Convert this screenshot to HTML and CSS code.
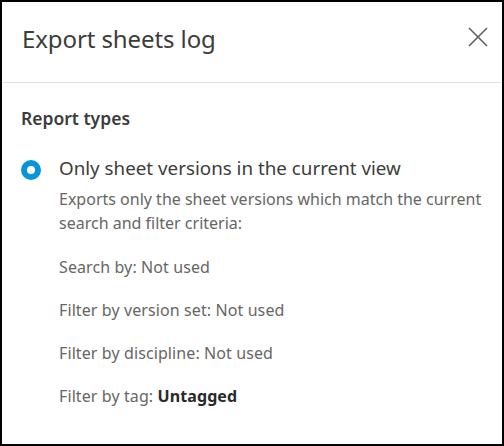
FILE: index.html
```html
<!DOCTYPE html>
<html>
<head>
<meta charset="utf-8">
<link rel="stylesheet" href="styles.css">
</head>
<body>
<div class="dialog">
  <div class="header">
    <h1 class="title">Export sheets log</h1>
    <button class="close" aria-label="Close">
      <svg width="20" height="20" viewBox="0 0 20 20"><path d="M1 1 L19 19 M19 1 L1 19" stroke="#5f5f5f" stroke-width="1.6" fill="none"/></svg>
    </button>
  </div>
  <div class="content">
    <h2 class="section">Report types</h2>
    <div class="option">
      <span class="radio"></span>
      <div class="option-body">
        <div class="option-label">Only sheet versions in the current view</div>
        <p class="desc">Exports only the sheet versions which match the current search and filter criteria:</p>
        <ul class="criteria">
          <li>Search by: Not used</li>
          <li>Filter by version set: Not used</li>
          <li>Filter by discipline: Not used</li>
          <li>Filter by tag: <strong>Untagged</strong></li>
        </ul>
      </div>
    </div>
  </div>
</div>
</body>
</html>
```
FILE: styles.css
```css
* { box-sizing: border-box; }
html, body { margin: 0; padding: 0; background: #fff; }
body { font-family: "Noto Sans", "Open Sans", sans-serif; }
.dialog {
  width: 504px;
  height: 446px;
  border: 2px solid #000;
  background: #fff;
  display: flex;
  flex-direction: column;
}
.header {
  height: 81px;
  border-bottom: 1px solid #e2e2e2;
  display: flex;
  align-items: center;
  justify-content: space-between;
  padding: 0 14px 8px 20px;
}
.title {
  margin: 0;
  font-size: 24px;
  font-weight: 400;
  color: #3c3c3c;
  letter-spacing: -0.1px;
}
.close {
  border: 0;
  background: none;
  padding: 0;
  width: 20px;
  height: 20px;
  display: flex;
  margin-top: -2px;
}
.content {
  padding: 23px 8px 0 19px;
}
.section {
  margin: 0;
  font-size: 17.5px;
  font-weight: 600;
  color: #3c3c3c;
  line-height: 24px;
}
.option {
  display: flex;
  gap: 18px;
  margin-top: 24px;
}
.radio {
  flex: none;
  width: 20px;
  height: 20px;
  border-radius: 50%;
  border: 6px solid #0696d7;
  margin-top: 6px;
}
.option-label {
  font-size: 18.8px;
  color: #3c3c3c;
  line-height: 28px;
}
.desc {
  margin: 5px 0 0 0;
  font-size: 16px;
  color: #666;
  line-height: 24px;
}
.criteria {
  list-style: none;
  margin: 20px 0 0 0;
  padding: 0;
  display: flex;
  flex-direction: column;
  gap: 19px;
}
.criteria li {
  font-size: 16px;
  color: #666;
  line-height: 24px;
  letter-spacing: 0.1px;
}
.criteria strong {
  font-weight: 700;
  color: #2a2a2a;
}
```
